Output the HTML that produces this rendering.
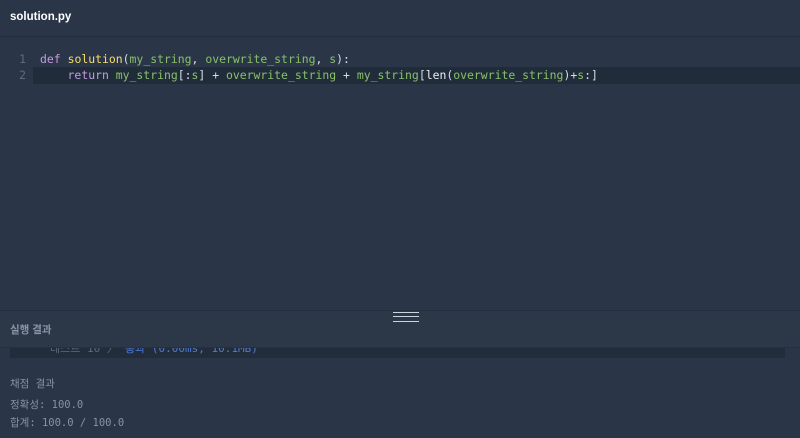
<!DOCTYPE html>
<html><head><meta charset="utf-8"><style>
html,body{margin:0;padding:0;width:800px;height:438px;overflow:hidden;background:#2a3647;font-family:"Liberation Sans","Noto Sans CJK KR",sans-serif}
.top{position:absolute;left:0;top:0;width:800px;height:36px;border-bottom:1px solid #222d3b;background:#2a3647}
.top span{position:absolute;left:10px;top:11px;color:#fff;font-weight:bold;font-size:11.5px}
.code{position:absolute;left:0;top:51px;width:800px;font-family:"DejaVu Sans Mono","Liberation Mono",monospace;font-size:11.45px;color:#d5dde6}
.ln{position:absolute;height:17px;line-height:17px;width:800px}
.num{position:absolute;left:14px;width:12px;color:#5d6b7c;text-align:right}
.txt{position:absolute;left:40px;white-space:pre}
.hl{position:absolute;left:33px;top:16px;width:767px;height:17px;background:#212c3b}
.k{color:#c49bdf}.f{color:#f3de6d}.g{color:#88c06a}.w{color:#e8eef4}
.div{position:absolute;left:0;top:310px;width:800px;height:1px;background:#232e3c}
.handle{position:absolute;left:393px;top:312px;width:26px;height:8px;border-top:1px solid #c8d4de;border-bottom:1px solid #c8d4de}
.handle:after{content:"";position:absolute;left:0;top:2.5px;width:26px;height:1px;background:#c8d4de}
.rh{position:absolute;left:0;top:311px;width:800px;height:36px;background:#2c3748;border-bottom:1px solid #263140}
.rh span{position:absolute;left:10px;top:11px;color:#8896a6;font-size:10.5px;font-weight:bold}
.band{position:absolute;left:10px;top:348px;width:775px;height:10px;background:#232c3b;overflow:hidden}
.band span{position:absolute;top:-8px;font-family:"DejaVu Sans Mono","Noto Sans CJK KR",monospace;font-size:11px;color:#5d6b7c;white-space:nowrap}
.res{position:absolute;left:10px;font-family:"DejaVu Sans Mono","Noto Sans CJK KR",monospace;font-size:10.5px;color:#8493a3}
</style></head><body>
<div class="top"><span>solution.py</span></div>
<div class="code">
<div class="hl"></div>
<div class="ln" style="top:0"><span class="num">1</span><span class="txt"><span class="k">def</span> <span class="f">solution</span>(<span class="g">my_string</span>, <span class="g">overwrite_string</span>, <span class="g">s</span>):</span></div>
<div class="ln" style="top:16px"><span class="num">2</span><span class="txt">    <span class="k">return</span> <span class="g">my_string</span>[:<span class="g">s</span>] + <span class="g">overwrite_string</span> + <span class="g">my_string</span>[<span class="w">len</span>(<span class="g">overwrite_string</span>)+<span class="g">s</span>:]</span></div>
</div>
<div class="div"></div>
<div class="rh"><span>실행 결과</span></div>
<div class="handle"></div>
<div class="band"><span style="left:40px">테스트 10 〉</span><span style="left:115px;color:#4f7bd9">통과 (0.00ms, 10.1MB)</span></div>
<div class="res" style="top:376px">채점 결과</div>
<div class="res" style="top:397px">정확성: 100.0</div>
<div class="res" style="top:415px">합계: 100.0 / 100.0</div>
</body></html>
